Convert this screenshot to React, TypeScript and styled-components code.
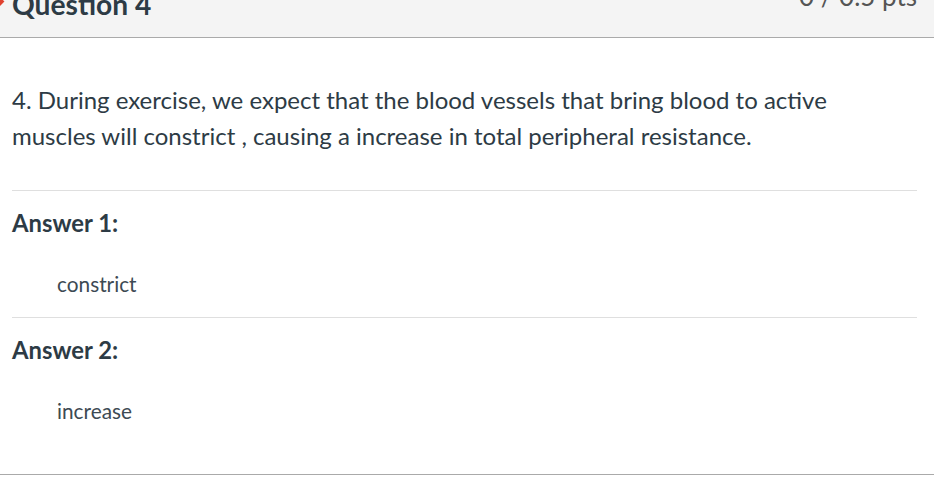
import styled, { createGlobalStyle } from "styled-components";

const GlobalStyle = createGlobalStyle`
  html, body {
    margin: 0;
    padding: 0;
    background: #fff;
    font-family: Lato, "Liberation Sans", sans-serif;
    color: #2d3b45;
  }
`;

const Card = styled.div`
  width: 934px;
  border-bottom: 1px solid #aaaaaa;
  overflow: hidden;
`;

const Header = styled.div`
  position: relative;
  display: flex;
  justify-content: space-between;
  align-items: flex-end;
  height: 37px;
  padding: 0 17px 0 12px;
  background: #f4f4f4;
  border-bottom: 1px solid #aaaaaa;
  overflow: hidden;

  &::before {
    content: "";
    position: absolute;
    left: -4px;
    top: -2px;
    width: 7px;
    height: 7px;
    background: #e0412f;
    transform: rotate(45deg);
  }
`;

const Title = styled.h2`
  margin: 0 0 19px;
  font-size: 28.2px;
  font-weight: 700;
  line-height: 28px;
  color: #2d3b45;
`;

const Points = styled.span`
  margin-bottom: 27px;
  font-size: 26px;
  line-height: 28px;
  color: #555555;
`;

const Body = styled.div`
  padding: 0 17px 0 12px;
`;

const QuestionText = styled.p`
  margin: 0;
  padding: 44px 0 36px;
  font-size: 24px;
  line-height: 36px;
  border-bottom: 1px solid #dfdfdf;

  span {
    display: block;
    max-width: 850px;
  }
`;

const AnswerBlock = styled.div<{ $last?: boolean }>`
  padding: 18px 0 ${(p) => (p.$last ? "49px" : "19px")};
  border-bottom: ${(p) => (p.$last ? "none" : "1px solid #dfdfdf")};
`;

const AnswerLabel = styled.h3`
  margin: 0;
  font-size: 23.8px;
  font-weight: 700;
  line-height: 28px;
`;

const AnswerValue = styled.div`
  margin: 33px 0 0 45px;
  font-size: 20.8px;
  line-height: 28px;
  color: #3d4a53;
`;

const answers = [
  { label: "Answer 1:", value: "constrict" },
  { label: "Answer 2:", value: "increase" },
];

export default function App() {
  return (
    <>
      <GlobalStyle />
      <Card>
        <Header>
          <Title>Question 4</Title>
          <Points>0 / 0.5 pts</Points>
        </Header>
        <Body>
          <QuestionText>
            <span>
              4. During exercise, we expect that the blood vessels that bring
              blood to active muscles will constrict , causing a increase in
              total peripheral resistance.
            </span>
          </QuestionText>
          {answers.map((a, i) => (
            <AnswerBlock key={a.label} $last={i === answers.length - 1}>
              <AnswerLabel>{a.label}</AnswerLabel>
              <AnswerValue>{a.value}</AnswerValue>
            </AnswerBlock>
          ))}
        </Body>
      </Card>
    </>
  );
}
